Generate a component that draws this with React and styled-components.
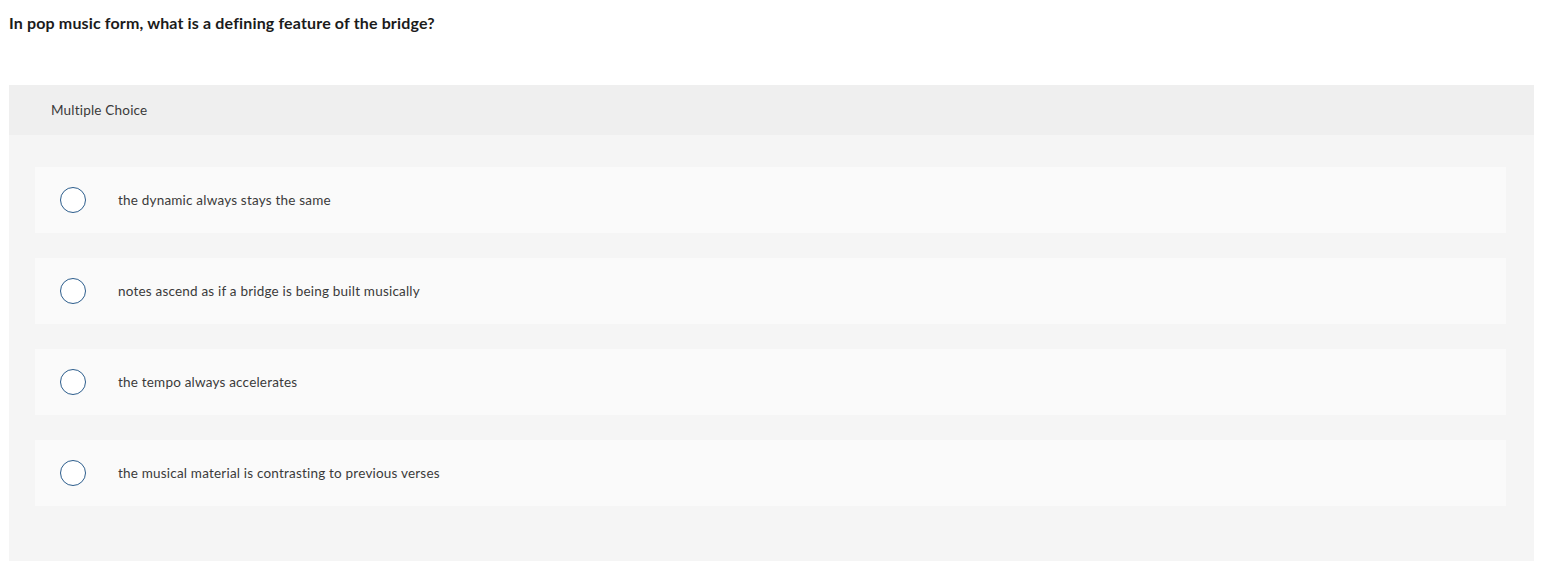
import React from 'react';
import styled, { createGlobalStyle } from 'styled-components';

const GlobalStyle = createGlobalStyle`
  body {
    margin: 0;
    background: #ffffff;
    font-family: Lato, "Open Sans", Arial, sans-serif;
    color: #222;
  }
`;

const Page = styled.div`
  padding: 12px 19px 0 9px;
`;

const Question = styled.h1`
  margin: 0;
  font-size: 16px;
  line-height: 22px;
  font-weight: 700;
  letter-spacing: 0.15px;
  color: #1b1b1b;
`;

const Panel = styled.div`
  margin-top: 51px;
  background: #f5f5f5;
  padding-bottom: 55px;
`;

const PanelHeader = styled.div`
  height: 50px;
  display: flex;
  align-items: center;
  padding-left: 42px;
  background: #efefef;
  font-size: 13.5px;
  letter-spacing: 0.2px;
  color: #3a3a3a;
`;

const Options = styled.div`
  display: flex;
  flex-direction: column;
  gap: 25px;
  padding: 32px 28px 0 26px;
`;

const Option = styled.label`
  height: 66px;
  display: flex;
  align-items: center;
  padding-left: 25px;
  background: #fafafa;
  cursor: pointer;
`;

const Radio = styled.span`
  box-sizing: border-box;
  width: 26px;
  height: 26px;
  border: 1.5px solid #2c5d8c;
  border-radius: 50%;
  background: #fff;
  flex-shrink: 0;
`;

const OptionText = styled.span`
  margin-left: 32px;
  font-size: 13.5px;
  letter-spacing: 0.2px;
  color: #3a3a3a;
`;

const choices = [
  'the dynamic always stays the same',
  'notes ascend as if a bridge is being built musically',
  'the tempo always accelerates',
  'the musical material is contrasting to previous verses',
];

export default function App() {
  return (
    <>
      <GlobalStyle />
      <Page>
        <Question>In pop music form, what is a defining feature of the bridge?</Question>
        <Panel>
          <PanelHeader>Multiple Choice</PanelHeader>
          <Options>
            {choices.map((c) => (
              <Option key={c}>
                <Radio />
                <OptionText>{c}</OptionText>
              </Option>
            ))}
          </Options>
        </Panel>
      </Page>
    </>
  );
}
